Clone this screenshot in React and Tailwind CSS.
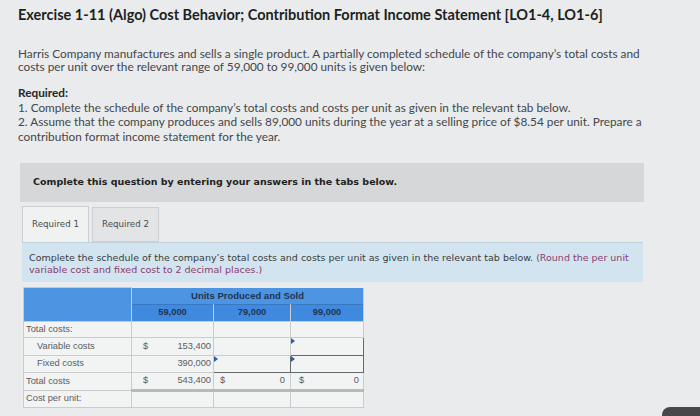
import React from 'react';

// small blue flag that marks an input cell
const Marker = () => (
  <span className="absolute left-0 top-0 w-0 h-0 border-t-[3px] border-t-transparent border-b-[3px] border-b-transparent border-l-[4px] border-l-[#2f5f9e]" />
);

const cell = 'border border-[#c9cbcd] p-0';
const input = 'relative border-[1.5px] border-[#65686c] p-0';

const App = () => {
  return (
    <div className="relative w-[700px] h-[416px] overflow-hidden bg-[#e9ebec] text-[#44474a]" style={{ fontFamily: 'Lato, "Open Sans", sans-serif' }}>
      <div className="pl-[18px] pt-[5px]">
        {/* Title */}
        <h1 className="text-[14.5px] leading-[20px] font-bold text-[#1d1f22]">
          Exercise 1-11 (Algo) Cost Behavior; Contribution Format Income Statement [LO1-4, LO1-6]
        </h1>

        <p className="mt-[22px] w-[640px] text-[11.8px] leading-[13px]">
          Harris Company manufactures and sells a single product. A partially completed schedule of the company’s total costs and costs per unit over the relevant range of 59,000 to 99,000 units is given below:
        </p>

        <div className="mt-[13px] w-[640px] text-[11.8px] leading-[14.5px]">
          <div className="font-bold text-[#26282b]">Required:</div>
          <div>1. Complete the schedule of the company’s total costs and costs per unit as given in the relevant tab below.</div>
          <div>
            2. Assume that the company produces and sells 89,000 units during the year at a selling price of $8.54 per unit. Prepare a contribution format income statement for the year.
          </div>
        </div>
      </div>

      {/* Instructions bar */}
      <div className="ml-[20px] mt-[19px] w-[624px] h-[39px] bg-[#d5d7d8] flex items-center pl-[13px]" style={{ fontFamily: '"DejaVu Sans", Verdana, sans-serif' }}>
        <span className="text-[9.5px] font-bold text-[#222]">Complete this question by entering your answers in the tabs below.</span>
      </div>

      {/* Tabs */}
      <div className="ml-[22px] mt-[4px] w-[621px]" style={{ fontFamily: '"DejaVu Sans", Verdana, sans-serif' }}>
        <div className="flex gap-[3px] items-end">
          <div className="w-[67px] h-[36px] flex items-center justify-center bg-[#f0f1f1] border border-[#cdd0d2] border-b-0 text-[8.7px] text-[#4a4c4f]">Required 1</div>
          <div className="w-[67px] h-[35px] flex items-center justify-center bg-[#e3e4e5] border border-[#cdd0d2] text-[8.7px] text-[#4a4c4f]">Required 2</div>
        </div>
        <div className="h-[40px] bg-[#d1e4ef] border-t border-[#bfd2de] pl-[7px] pt-[9px] text-[9.5px] leading-[11.5px] text-[#3a3d40] whitespace-nowrap">
          Complete the schedule of the company’s total costs and costs per unit as given in the relevant tab below. <span className="text-[#8b3d6e]">(Round the per unit<br />variable cost and fixed cost to 2 decimal places.)</span>
        </div>
      </div>

      {/* Schedule table */}
      <div className="ml-[23px] mt-[5px]" style={{ fontFamily: '"Liberation Sans", Arial, sans-serif' }}>
        <table className="border-collapse text-[9.3px] leading-none text-[#5a5c5f]">
          <thead>
            <tr className="h-[17px] bg-[#4d94e2]">
              <th rowSpan={2} className="w-[108px] border border-[#c9cbcd] p-0"></th>
              <th colSpan={4} className="border-x border-[#c9cbcd] p-0 text-[9.5px] font-bold text-[#1f3550]">Units Produced and Sold</th>
            </tr>
            <tr className="h-[17px] bg-[#3f89df] text-[#1f3550] font-bold text-[9.3px]">
              <th colSpan={2} className="w-[82px] border border-[#c9cbcd] border-t-[#3a78c0] p-0">59,000</th>
              <th className="w-[77px] border border-[#c9cbcd] border-t-[#3a78c0] p-0">79,000</th>
              <th className="w-[73px] border border-[#c9cbcd] border-t-[#3a78c0] p-0">99,000</th>
            </tr>
          </thead>
          <tbody className="bg-[#f2f3f3]">
            <tr className="h-[16px]">
              <td className={`${cell} pl-[2px]`}>Total costs:</td>
              <td colSpan={2} className={cell}></td>
              <td className={cell}></td>
              <td className={cell}></td>
            </tr>
            <tr className="h-[18px]">
              <td className={`${cell} pl-[13px]`}>Variable costs</td>
              <td className="w-[22px] border-y border-l border-[#c9cbcd] p-0 pl-[11px]">$</td>
              <td className="w-[60px] border-y border-r border-[#c9cbcd] p-0 text-right pr-[2px]">153,400</td>
              <td className={`${cell} border-t-[#7a7d80]`}></td>
              <td className={input}><Marker /></td>
            </tr>
            <tr className="h-[17px]">
              <td className={`${cell} pl-[13px]`}>Fixed costs</td>
              <td className="border-y border-l border-[#c9cbcd] p-0"></td>
              <td className="border-y border-r border-[#c9cbcd] p-0 text-right pr-[2px]">390,000</td>
              <td className={input}><Marker /></td>
              <td className={input}><Marker /></td>
            </tr>
            <tr className="h-[18px]">
              <td className={`${cell} pl-[2px]`}>Total costs</td>
              <td className="border-y border-l border-[#c9cbcd] p-0 pl-[11px]">$</td>
              <td className="border-y border-r border-[#c9cbcd] p-0 text-right pr-[2px]">543,400</td>
              <td className={cell}>
                <div className="flex justify-between pl-[6px] pr-[5px]"><span>$</span><span>0</span></div>
              </td>
              <td className={cell}>
                <div className="flex justify-between pl-[8px] pr-[4px]"><span>$</span><span>0</span></div>
              </td>
            </tr>
            <tr className="h-[17px]">
              <td className={`${cell} pl-[2px]`}>Cost per unit:</td>
              <td colSpan={2} className={`${cell} border-t-[3px] border-t-[#b7b9bb]`}></td>
              <td className={`${cell} border-t-[3px] border-t-[#b7b9bb]`}></td>
              <td className={`${cell} border-t-[3px] border-t-[#b7b9bb]`}></td>
            </tr>
          </tbody>
        </table>
      </div>

      {/* corner of a floating button */}
      <div className="absolute right-0 bottom-0 w-[38px] h-[9px] rounded-tl-[8px] bg-[#46484b]" />
    </div>
  );
};

export default App;
